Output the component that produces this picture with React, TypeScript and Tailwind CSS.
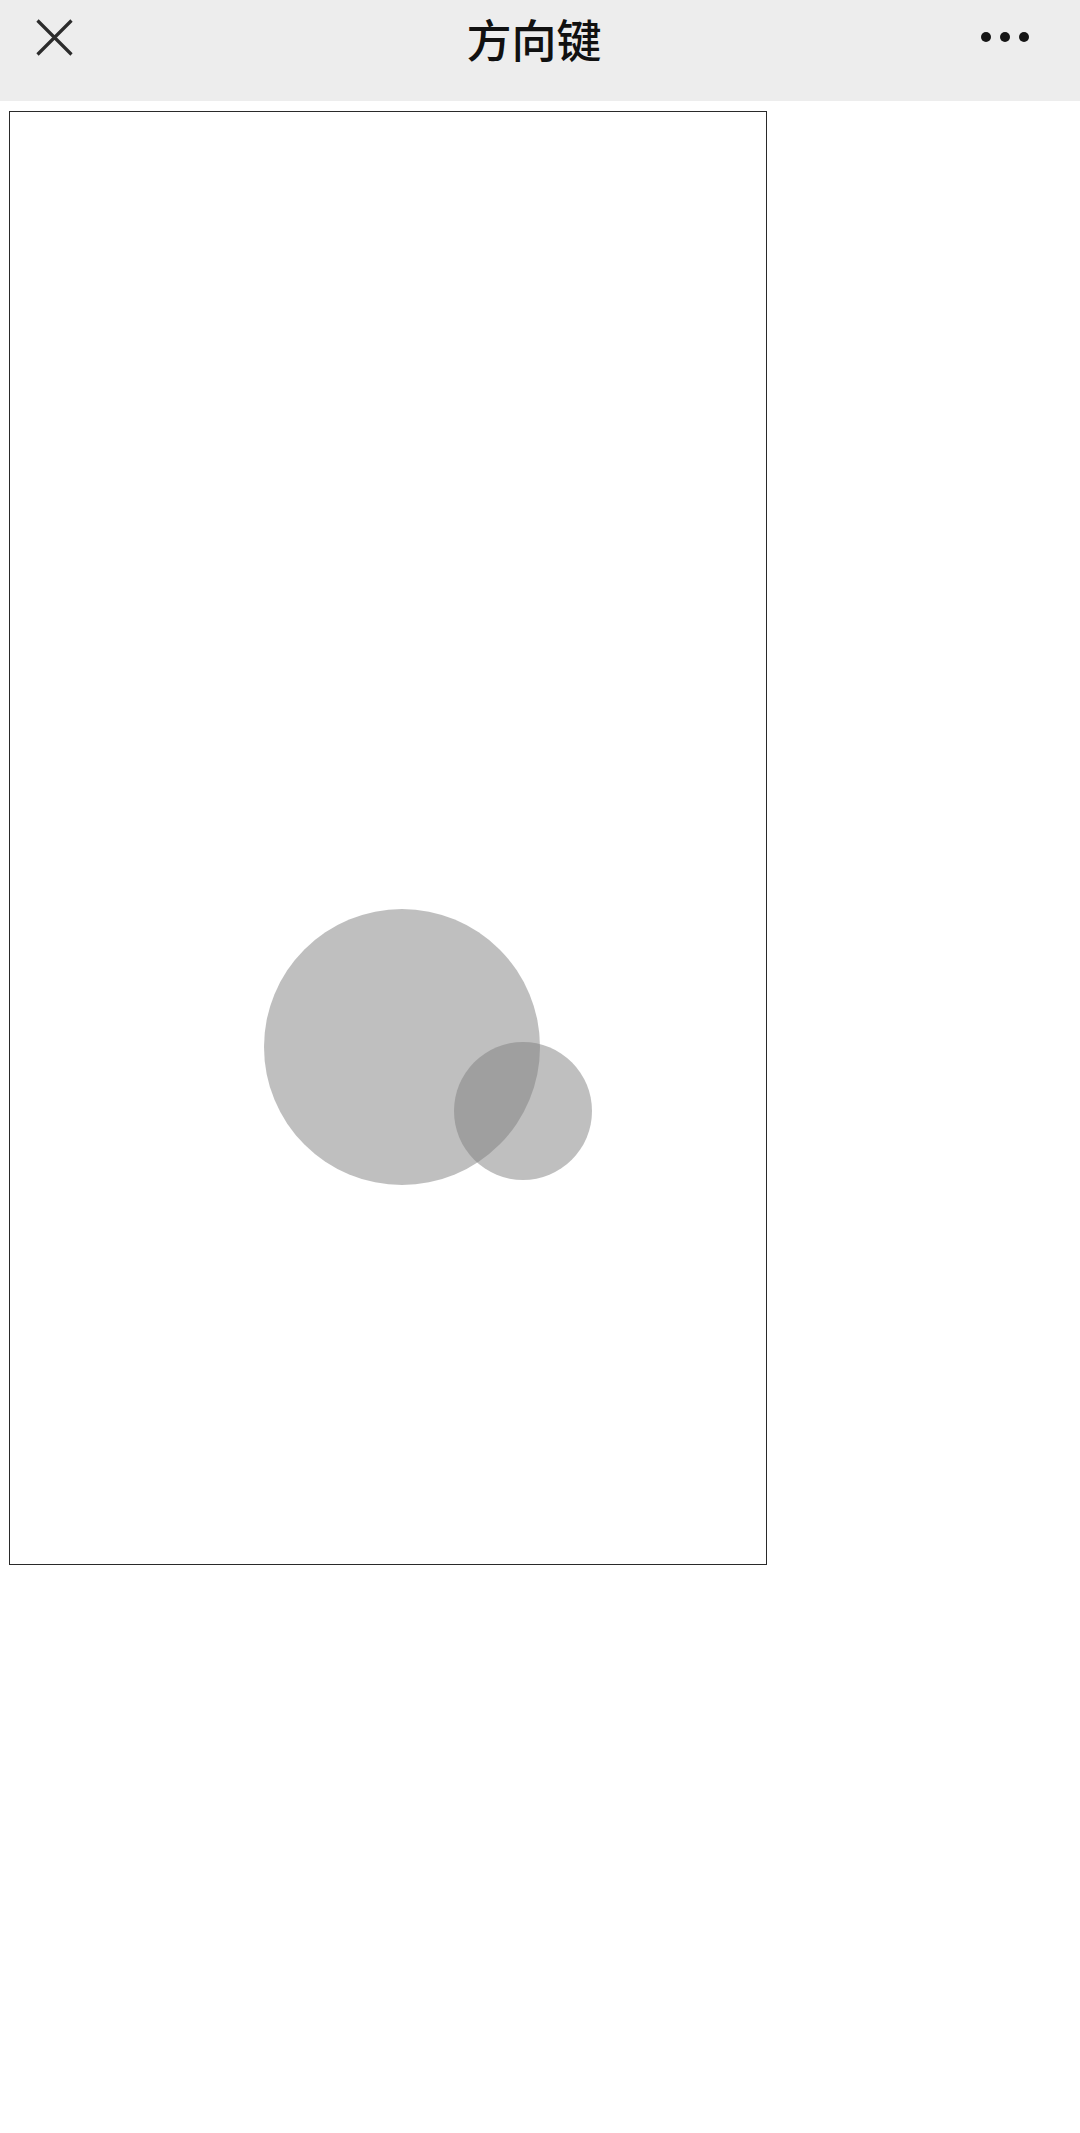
import React from "react";

export default function App() {
  return (
    <div className="w-[1080px] h-[2133px] bg-white" style={{ fontFamily: '"Noto Sans CJK SC", "Noto Sans", sans-serif' }}>
      <header className="h-[101px] bg-[#ededed] flex items-start justify-between pl-[36px] pr-[51px]">
        <button className="mt-[19px] w-[37px] h-[37px] flex items-center justify-center">
          <svg width="37" height="37" viewBox="0 0 37 37" fill="none">
            <path d="M1.5 1.5 L35.5 35.5 M35.5 1.5 L1.5 35.5" stroke="#2b2b2b" strokeWidth="3.2" />
          </svg>
        </button>
        <h1 className="mt-[16px] ml-[14px] text-[45px] leading-none font-medium text-[#111111]">方向键</h1>
        <div className="mt-[32px] flex items-center gap-[9px]">
          <span className="w-[10px] h-[10px] rounded-full bg-[#151515]" />
          <span className="w-[10px] h-[10px] rounded-full bg-[#151515]" />
          <span className="w-[10px] h-[10px] rounded-full bg-[#151515]" />
        </div>
      </header>
      <div className="mt-[10px] ml-[9px] relative w-[758px] h-[1454px] border-[1.5px] border-[#2a2a2a]">
        <div className="absolute left-[254px] top-[797px] w-[276px] h-[276px] rounded-full bg-[rgba(128,128,128,0.5)]" />
        <div className="absolute left-[444px] top-[930px] w-[138px] h-[138px] rounded-full bg-[rgba(128,128,128,0.5)]" />
      </div>
    </div>
  );
}
